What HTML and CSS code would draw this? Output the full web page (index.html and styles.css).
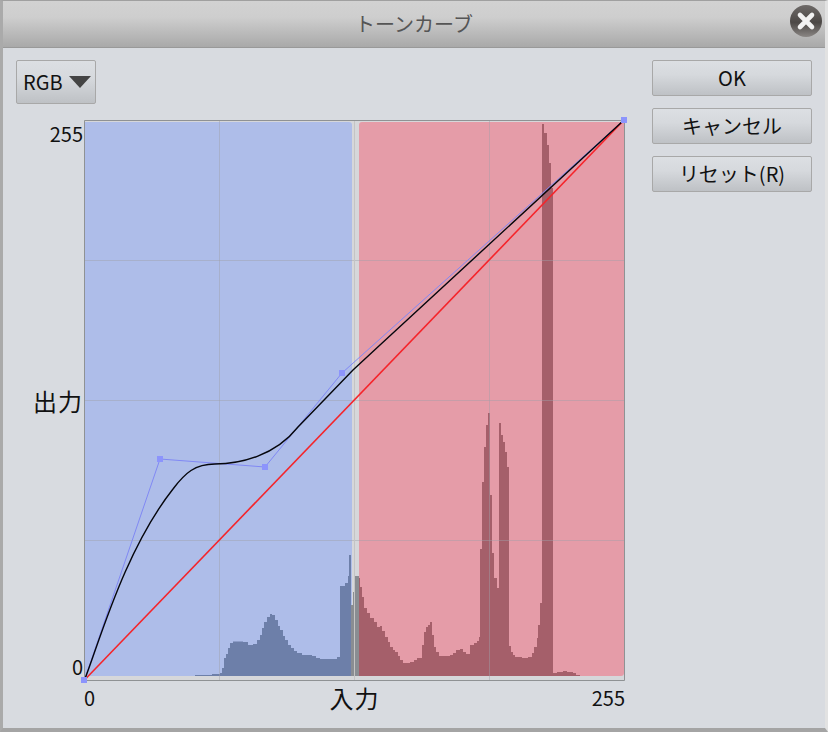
FILE: index.html
```html
<!DOCTYPE html>
<html lang="ja">
<head>
<meta charset="utf-8">
<title>トーンカーブ</title>
<link rel="stylesheet" href="styles.css">
</head>
<body>
<div class="window">
  <header class="titlebar">
    <span class="title">トーンカーブ</span>
    <span class="close">
      <svg width="34" height="34" viewBox="0 0 34 34">
        <defs>
          <linearGradient id="closeFill" x1="0" y1="0" x2="0" y2="1">
            <stop offset="0" stop-color="#6e6a68"/>
            <stop offset="0.55" stop-color="#4c4846"/>
            <stop offset="1" stop-color="#8a8684"/>
          </linearGradient>
        </defs>
        <circle cx="17" cy="17" r="16" fill="url(#closeFill)"/>
        <path d="M11 11 L23 23 M23 11 L11 23" stroke="#f2f2f2" stroke-width="4.6" stroke-linecap="round"/>
      </svg>
    </span>
  </header>
  <main class="content">
    <section class="left">
      <button class="dropdown"><span>RGB</span><i class="caret"></i></button>
      <div class="chart">
        <div class="yaxis">
          <span>255</span>
          <span class="cjk">出力</span>
          <span>0</span>
        </div>
        <svg class="plot" width="541" height="561" viewBox="84 120 541 561">
          <rect x="84" y="120" width="541" height="561" fill="#d6d7da"/>
          <path d="M85 122 H349 Q352 122 352 125 V673 Q352 676 349 676 H85 Z" fill="#aebde9"/>
          <path d="M362 122 H624 V673 Q624 676 621 676 H362 Q359 676 359 673 V125 Q359 122 362 122 Z" fill="#e59ca8"/>
          <path fill="#6d7fa9" d="M195 676 V675 H212 V674 H220 V673 H222 V668 H224 V658 H226 V654 H228 V648 H230 V643 H233 V641.500 H243 V642 H248 V645 H253 V644 H257 V640 H260 V635 H262 V628 H264 V622 H267 V617 H270 V614 H272 V615 H275 V620 H278 V626 H280 V630 H283 V636 H285 V640 H288 V645 H291 V648 H294 V651 H297 V653 H302 V655 H312 V656 H316 V658 H320 V659 H337 V657 H340 V586 H345 V583 H348 V576 H349 V555 H351 V676 Z"/>
          <path fill="#8a8d92" d="M351 676 V605 H353 V592 H355 V676 Z"/>
          <path fill="#8a8d92" d="M355 676 V576 H359 V676 Z"/>
          <path fill="#a55f6a" d="M359 676 V578 H360 V587 H362 V597 H364 V608 H367 V613 H370 V618 H374 V622 H377 V627 H380 V626 H382 V631 H385 V637 H388 V642 H390 V647 H393 V650 H395 V652 H398 V656 H400 V660 H403 V663 H410 V662 H414 V660 H417 V658 H422 V645 H424 V632 H426 V627 H428 V625 H430 V622 H432 V635 H434 V647 H436 V652 H439 V656 H450 V655 H453 V653 H456 V650 H460 V649 H463 V652 H466 V654 H470 V645 H474 V643 H477 V641 H479 V637 H480 V549 H482 V482 H484 V447 H486 V425 H488 V413 H490 V495 H492 V553 H494 V578 H497 V588 H499 V423 H501 V435 H503 V442 H505 V452 H507 V467 H509 V646 H511 V652 H513 V655 H515 V657 H522 V658 H528 V657 H532 V653 H534 V647 H537 V638 H538 V625 H540 V603 H542 V124 H544 V133 H547 V145 H549 V163 H551 V188 H553 V673 H557 V672 H563 V671 H567 V672 H573 V673 H576 V675 H580 V676 Z"/>
          <path class="grid" d="M219.500 120 V680 M489.500 120 V680 M84 260.500 H624 M84 400.500 H624 M84 540.500 H624"/>
          <path class="center" d="M354.500 120 V680"/>
          <path class="frame" d="M84.500 680.500 V120.500 H624.500 V680.500 Z"/>
          <path class="handles" d="M84.500 680 L160 459 L265 467 L342 373 L624 120"/>
          <path class="diag" d="M84.500 680 L624 120"/>
          <path class="curve" d="M84.500 680 C100 640 125 550 173 489 C185 473 195 464 215 464 C240 464 275 456 298 427 L353 370 L380 345 L624 120"/>
          <g class="knots">
            <rect x="81" y="677" width="6" height="6"/>
            <rect x="157" y="456" width="6" height="6"/>
            <rect x="262" y="464" width="6" height="6"/>
            <rect x="339" y="370" width="6" height="6"/>
            <rect x="621" y="117" width="6" height="6"/>
          </g>
        </svg>
        <div class="xaxis">
          <span>0</span>
          <span class="cjk">入力</span>
          <span class="end">255</span>
        </div>
      </div>
    </section>
    <aside class="actions">
      <button class="btn">OK</button>
      <button class="btn">キャンセル</button>
      <button class="btn">リセット(R)</button>
    </aside>
  </main>
</div>
</body>
</html>
```
FILE: styles.css
```css
* { box-sizing: border-box; }
html, body { margin: 0; padding: 0; }
body {
  width: 828px;
  height: 732px;
  overflow: hidden;
  background: #d8dbe0;
  font-family: "Noto Sans CJK JP", "Noto Sans", sans-serif;
  color: #111;
}
.window {
  width: 828px;
  height: 732px;
  display: flex;
  flex-direction: column;
  border-top: 1px solid #a0a0a0;
  border-left: 3px solid #aaaaaa;
  border-right: 3px solid #e2e2e2;
  border-bottom: 4px solid #a4a4a4;
  background: #d8dbe0;
}
.titlebar {
  position: relative;
  height: 47px;
  flex: none;
  display: flex;
  align-items: center;
  justify-content: center;
  background: linear-gradient(#d2d2d2 0%, #cecece 35%, #a9a9a9 100%);
  border-bottom: 1px solid #999;
}
.title {
  font-size: 20px;
  line-height: 46px;
  color: #555;
}
.close {
  position: absolute;
  right: 2px;
  top: 3px;
  width: 34px;
  height: 34px;
}
.close svg { display: block; }
.content {
  flex: 1;
  display: flex;
  padding: 12px 13px 0 13px;
  gap: 27px;
}
.left {
  width: 609px;
  flex: none;
  display: flex;
  flex-direction: column;
}
.dropdown {
  width: 80px;
  height: 44px;
  padding: 0 0 0 6px;
  display: flex;
  align-items: center;
  gap: 6px;
  border: 1px solid #a8a8a8;
  border-radius: 2px;
  background: linear-gradient(#dcdfe3 0%, #d6d9dd 40%, #bec1c5 100%);
  font: 20px/28px "Noto Sans CJK JP", sans-serif;
  color: #111;
}
.caret {
  width: 0;
  height: 0;
  border-left: 11px solid transparent;
  border-right: 11px solid transparent;
  border-top: 12px solid #444;
}
.chart {
  margin-top: 16px;
  display: grid;
  grid-template-columns: 68px 541px;
  grid-template-rows: 561px 28px;
}
.yaxis {
  display: grid;
  grid-template-rows: 28px 1fr 28px;
  align-items: center;
  justify-items: end;
  font-size: 20px;
  line-height: 28px;
  padding-right: 1px;
}
.yaxis .cjk { font-size: 24px; letter-spacing: 1px; }
.plot { display: block; overflow: visible; }
.xaxis {
  grid-column: 2;
  display: grid;
  grid-template-columns: 1fr auto 1fr;
  align-items: center;
  font-size: 20px;
  line-height: 28px;
  padding-top: 3px;
}
.xaxis .cjk { font-size: 24px; letter-spacing: 1px; }
.xaxis .end { justify-self: end; }
.grid { fill: none; stroke: #a0a0a8; stroke-opacity: 0.45; stroke-width: 1; }
.center { fill: none; stroke: #c4c4c4; stroke-width: 1; }
.frame { fill: none; stroke: #8f9294; stroke-width: 1; }
.handles { fill: none; stroke: #8088f4; stroke-width: 1; }
.diag { fill: none; stroke: #f5242a; stroke-width: 1.6; }
.curve { fill: none; stroke: #05060c; stroke-width: 1.4; }
.knots rect { fill: #8c94fc; }
.actions {
  width: 160px;
  flex: none;
  display: flex;
  flex-direction: column;
  gap: 12px;
}
.btn {
  width: 160px;
  height: 36px;
  padding: 0;
  border: 1px solid #a8a8a8;
  border-radius: 2px;
  background: linear-gradient(#dcdfe3 0%, #d6d9dd 40%, #bec1c5 100%);
  font: 20px/28px "Noto Sans CJK JP", sans-serif;
  color: #111;
}
```
